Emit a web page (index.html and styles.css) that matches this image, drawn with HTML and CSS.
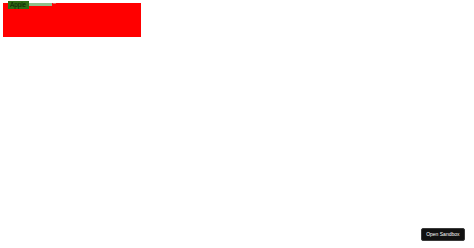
FILE: index.html
```html
<!DOCTYPE html>
<html>
<head>
<meta charset="utf-8">
<link rel="stylesheet" href="styles.css">
</head>
<body>
<div class="page">
  <div class="top">
    <div class="tabs">
      <span class="tab-green"></span>
      <span class="tab-gray">•••</span>
    </div>
  </div>
  <div class="box">
    <span class="label">Apple</span>
  </div>
</div>
<a class="sandbox">Open Sandbox</a>
</body>
</html>
```
FILE: styles.css
```css
html, body {
  margin: 0;
  padding: 0;
  background: #ffffff;
  font-family: "Liberation Sans", Arial, sans-serif;
}
.page {
  position: relative;
  width: 474px;
  height: 248px;
}
.top {
  position: absolute;
  left: 29px;
  top: 0;
}
.tabs {
  display: flex;
  align-items: flex-start;
  gap: 1px;
}
.tab-green {
  display: block;
  width: 23px;
  height: 3px;
  background: #8fbf8a;
}
.tab-gray {
  font-size: 3px;
  line-height: 2px;
  color: #c8c8c8;
}
.box {
  margin: 3px 0 0 3px;
  width: 138px;
  height: 34px;
  background: #ff0000;
  padding-left: 5px;
  box-sizing: border-box;
}
.label {
  display: inline-block;
  background: #2f6d14;
  color: #0a1a05;
  font-size: 6.3px;
  line-height: 8px;
  height: 8px;
  padding: 0 3px 0 2px;
  margin-top: -2px;
  vertical-align: top;
}
.sandbox {
  position: fixed;
  right: 9px;
  bottom: 7px;
  background: #111111;
  color: #ffffff;
  font-size: 5px;
  line-height: 11px;
  height: 11px;
  padding: 0 4.5px;
  border-radius: 2px;
  border: 1px solid #3a3a3a;
}
```
